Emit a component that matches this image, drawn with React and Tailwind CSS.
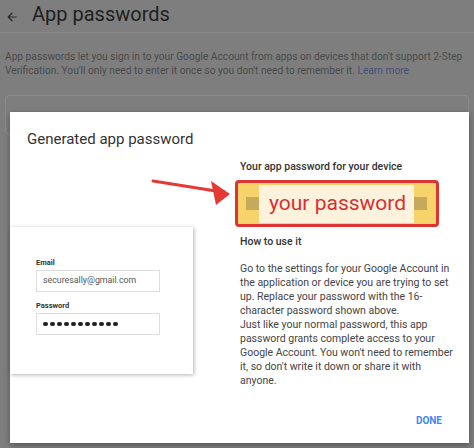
const font = { fontFamily: "Roboto, 'Liberation Sans', sans-serif" };

const Arrow = () => (
    <svg className="absolute left-[140px] top-[64px]" width="92" height="32" viewBox="0 0 92 32">
        <line x1="3" y1="5" x2="66" y2="15" stroke="#e53935" strokeWidth="3" strokeLinecap="round" />
        <polygon points="80,18 61,5 66,29" fill="#e53935" />
    </svg>
);

const App = () => {
    return (
        <div className="relative w-[474px] h-[448px] overflow-hidden bg-[#7e7e7e]" style={font}>
            {/* page behind the dialog */}
            <div className="flex items-center h-[33px] border-b border-[#888] pl-[5px]">
                <svg width="14" height="14" viewBox="0 0 24 24" className="mr-[13px] mt-[2px]">
                    <path d="M20 11H7.83l5.59-5.59L12 4l-8 8 8 8 1.41-1.41L7.83 13H20v-2z" fill="#2a2a2a" />
                </svg>
                <div className="text-[20px] leading-none text-[#202020] mb-[4px]">App passwords</div>
            </div>
            <p className="px-[5px] pt-[17px] text-[10.2px] leading-[14px] text-[#4a4a4a]">
                App passwords let you sign in to your Google Account from apps on devices that don't support 2-Step Verification. You'll only need to enter it once so you don't need to remember it. <span className="text-[#44507a]">Learn more</span>
            </p>
            <div className="mx-[5px] mt-[17px] h-[40px] rounded-[4px] border border-[#8c8c8c]"></div>

            {/* dialog */}
            <div className="absolute left-[10px] top-[112px] w-[459px] h-[331px] bg-white shadow-[0_2px_6px_rgba(0,0,0,0.35)] flex">
                <div className="w-[224px] flex flex-col">
                    <div className="pl-[17px] pt-[17px] text-[15px] leading-[20px] text-[#333]">Generated app password</div>
                    <div className="mt-[78px] w-[183px] h-[147px] bg-white shadow-[1px_1px_4px_rgba(0,0,0,0.3)] pl-[26px] pt-[31px]">
                        <div className="text-[7.5px] font-bold text-[#333] leading-[10px]">Email</div>
                        <div className="mt-[2px] w-[124px] h-[22px] border border-[#ddd] flex items-center pl-[6px] text-[8.8px] text-[#555]">securesally@gmail.com</div>
                        <div className="mt-[9px] text-[7.5px] font-bold text-[#333] leading-[10px]">Password</div>
                        <div className="mt-[2px] w-[124px] h-[22px] border border-[#ddd] flex items-center pl-[6px] gap-[2.5px]">
                            {Array.from({ length: 11 }).map((_, i) => (
                                <span key={i} className="w-[4.5px] h-[4.5px] rounded-full bg-[#222]"></span>
                            ))}
                        </div>
                    </div>
                </div>
                <div className="w-[214px] ml-[6px] flex flex-col">
                    <div className="pt-[48px] text-[10.5px] leading-[14px] font-medium text-[#333]">Your app password for your device</div>
                    <div className="mt-[6px] -ml-[5px] w-[204px] h-[47px] rounded-[4px] border-[3px] border-[#dd3333] bg-[#f8d26a] flex items-center pl-[8px] pr-[9px]">
                        <span className="w-[13px] h-[13px] bg-[#c4aa5a]"></span>
                        <div className="flex-1 h-[38px] bg-[#fdf3dc] flex items-center pl-[10px] text-[21px] whitespace-nowrap text-[#d63033] leading-none pb-[1px]">your password</div>
                        <span className="w-[13px] h-[13px] bg-[#c4aa5a]"></span>
                    </div>
                    <div className="mt-[8px] text-[10.5px] leading-[14px] font-medium text-[#333]">How to use it</div>
                    <div className="mt-[13px] text-[10.5px] leading-[14px] text-[#444]">
                        Go to the settings for your Google Account in the application or device you are trying to set up. Replace your password with the 16-character password shown above.<br />
                        Just like your normal password, this app password grants complete access to your Google Account. You won't need to remember it, so don't write it down or share it with anyone.
                    </div>
                    <div className="mt-auto mb-[15px] self-end mr-[12px] text-[10px] font-bold text-[#4285f4]">DONE</div>
                </div>
                <Arrow />
            </div>
        </div>
    );
};

export default App;
